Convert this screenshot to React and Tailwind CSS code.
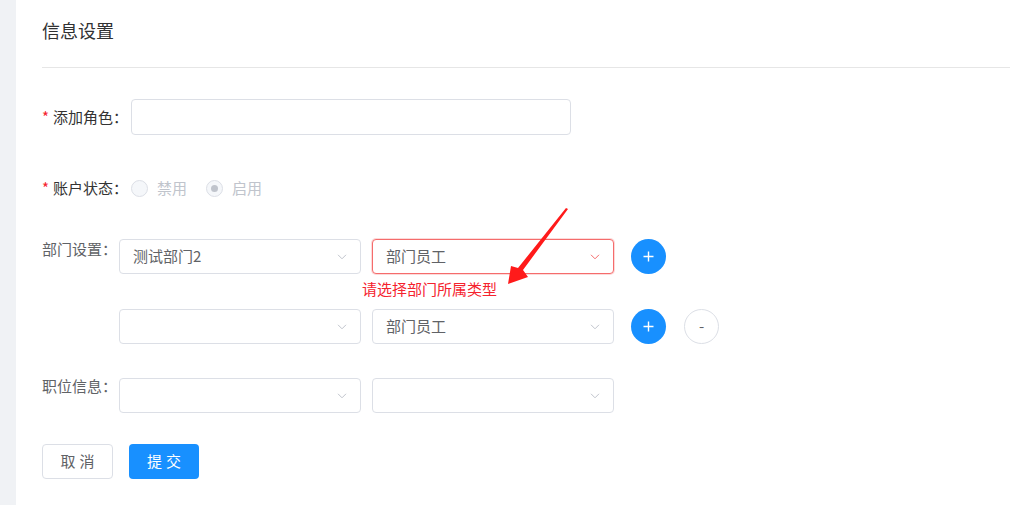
import React from 'react';

const font = { fontFamily: '"Noto Sans CJK SC", "Noto Sans", sans-serif' };

function Chevron({ red }) {
    return (
        <svg width="10" height="6" viewBox="0 0 10 6" className="shrink-0">
            <polyline points="1,0.8 5,4.8 9,0.8" fill="none" stroke={red ? '#f56c6c' : '#c0c4cc'} strokeWidth="1" />
        </svg>
    );
}

function Select({ value, error }) {
    return (
        <div
            className={`w-[242px] h-[35px] rounded-[4px] border bg-white flex items-center justify-between pl-[13px] pr-[13px] ${
                error ? 'border-[#f56c6c] shadow-[0_0_0_1px_rgba(245,108,108,0.25)]' : 'border-[#dcdfe6]'
            }`}
        >
            <span className="text-[15px] text-[#606266]">{value}</span>
            <Chevron red={error} />
        </div>
    );
}

function PlusBtn() {
    return (
        <div className="w-[35px] h-[35px] rounded-full bg-[#1890ff] flex items-center justify-center">
            <svg width="11" height="11" viewBox="0 0 11 11">
                <path d="M5.5 0.5v10M0.5 5.5h10" stroke="#fff" strokeWidth="1.4" />
            </svg>
        </div>
    );
}

export default function App() {
    return (
        <div className="relative w-[1010px] h-[505px] flex bg-white overflow-hidden" style={font}>
            {/* left gutter */}
            <div className="w-[16px] h-full bg-[#f0f2f5] shrink-0"></div>

            <div className="flex-1 pl-[26px]">
                {/* Title */}
                <div className="pt-[19px] h-[68px] text-[18px] leading-[22px] text-[#303133] border-b border-[#e6e6e6]">信息设置</div>

                {/* 添加角色 */}
                <div className="flex items-center mt-[31px] h-[36px]">
                    <div className="w-[89px] text-[15px] text-[#333] flex items-center">
                        <span className="text-[#f5222d] mr-[4px] w-[7px]">*</span>
                        <span>添加角色：</span>
                    </div>
                    <div className="w-[440px] h-[36px] rounded-[4px] border border-[#dcdfe6] bg-white"></div>
                </div>

                {/* 账户状态 */}
                <div className="flex items-center mt-[43px] h-[20px]">
                    <div className="w-[89px] text-[15px] text-[#333] flex items-center">
                        <span className="text-[#f5222d] mr-[4px] w-[7px]">*</span>
                        <span>账户状态：</span>
                    </div>
                    <div className="flex items-center">
                        <span className="w-[17px] h-[17px] rounded-full border border-[#dcdfe6] bg-[#f5f7fa]"></span>
                        <span className="ml-[9px] text-[15px] text-[#c0c4cc]">禁用</span>
                        <span className="ml-[19px] w-[17px] h-[17px] rounded-full border border-[#dcdfe6] bg-[#f5f7fa] flex items-center justify-center">
                            <span className="w-[7px] h-[7px] rounded-full bg-[#c0c4cc]"></span>
                        </span>
                        <span className="ml-[9px] text-[15px] text-[#c0c4cc]">启用</span>
                    </div>
                </div>

                {/* 部门设置 */}
                <div className="flex mt-[41px]">
                    <div className="w-[77px] text-[15px] text-[#606266] leading-[20px]">部门设置：</div>
                    <div className="flex flex-col">
                        <div className="flex items-center gap-[11px]">
                            <Select value="测试部门2" />
                            <Select value="部门员工" error />
                            <div className="ml-[6px]"><PlusBtn /></div>
                        </div>
                        <div className="h-[35px] pl-[243px] pt-[5px] text-[15px] leading-[20px] text-[#f5222d]">请选择部门所属类型</div>
                        <div className="flex items-center gap-[11px]">
                            <Select value="" />
                            <Select value="部门员工" />
                            <div className="ml-[6px]"><PlusBtn /></div>
                            <div className="ml-[7px] w-[35px] h-[35px] rounded-full border border-[#dcdfe6] bg-white flex items-center justify-center text-[15px] text-[#606266]">-</div>
                        </div>
                    </div>
                </div>

                {/* 职位信息 */}
                <div className="flex mt-[34px]">
                    <div className="w-[77px] text-[15px] text-[#606266] leading-[20px] -mt-[2px]">职位信息：</div>
                    <div className="flex items-center gap-[11px]">
                        <Select value="" />
                        <Select value="" />
                    </div>
                </div>

                {/* buttons */}
                <div className="flex items-center mt-[31px] gap-[16px]">
                    <button className="w-[71px] h-[35px] rounded-[4px] border border-[#dcdfe6] bg-white text-[15px] text-[#606266] tracking-[4px] pl-[4px]">取消</button>
                    <button className="w-[70px] h-[35px] rounded-[4px] bg-[#1890ff] text-[15px] text-white tracking-[4px] pl-[4px]">提交</button>
                </div>
            </div>

            {/* red annotation arrow */}
            <svg className="absolute left-0 top-0 pointer-events-none" width="1010" height="505">
                <polygon points="568,209 523,270 528,277 508,284 511,266 518,268 566,208" fill="#ff1a1a" />
            </svg>
        </div>
    );
}
